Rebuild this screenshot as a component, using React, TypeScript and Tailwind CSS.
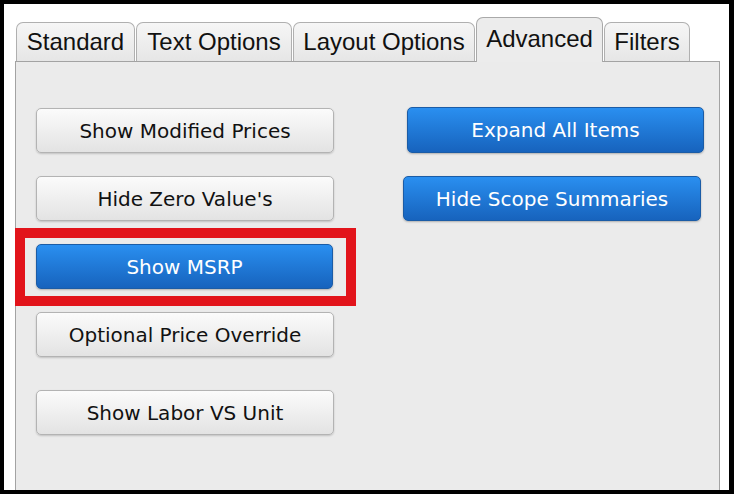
const tabs = [
  { label: "Standard", w: "w-[119px]" },
  { label: "Text Options", w: "w-[156px]" },
  { label: "Layout Options", w: "w-[182px]" },
  { label: "Advanced", w: "w-[127px]", active: true },
  { label: "Filters", w: "w-[86px]" },
];

const grayBtn =
  "h-[45px] rounded-[5px] border border-[#b3b3b3] bg-gradient-to-b from-[#fbfbfb] to-[#e3e3e3] text-[20px] text-[#111] shadow-[0_1px_2px_rgba(0,0,0,0.18)]";
const blueBtn =
  "h-[45px] rounded-[5px] border border-[#1b5ca6] bg-gradient-to-b from-[#2a8ff0] to-[#1763bd] text-[20px] text-white shadow-[0_1px_2px_rgba(0,0,0,0.25)]";

const App = () => {
  return (
    <div className="w-[734px] h-[494px] bg-black pt-[4px] pl-[4px] pr-[5px] pb-[4px] overflow-hidden">
      <div
        className="w-full h-full bg-white pl-[11px] pt-[13px] flex flex-col"
        style={{ fontFamily: "'DejaVu Sans', Verdana, sans-serif" }}
      >
        {/* tabs */}
        <div
          className="flex items-end gap-[1px] relative z-10 pl-[1px]"
          style={{ fontFamily: "'Liberation Sans', Arial, sans-serif" }}
        >
          {tabs.map((t) =>
            t.active ? (
              <div
                key={t.label}
                className={`${t.w} h-[45px] -mb-px rounded-t-[7px] border border-b-0 border-[#a9a9a9] bg-[#ececec] flex items-center justify-center text-[24px] text-[#111] pb-[2px]`}
              >
                {t.label}
              </div>
            ) : (
              <div
                key={t.label}
                className={`${t.w} h-[39px] rounded-t-[7px] border border-b-0 border-[#b0b0b0] bg-gradient-to-b from-[#f6f6f6] to-[#e6e6e6] flex items-center justify-center text-[24px] text-[#111]`}
              >
                {t.label}
              </div>
            )
          )}
        </div>

        {/* panel */}
        <div className="w-[705px] flex-1 border border-b-0 border-[#a3a3a3] bg-[#ebebeb] pl-[20px] pt-[46px] flex">
          <div className="w-[298px] flex flex-col">
            <button className={grayBtn}>Show Modified Prices</button>
            <button className={`${grayBtn} mt-[23px] h-[44px]`}>Hide Zero Value's</button>
            <div className="relative mt-[23px]">
              <button className={`${blueBtn} w-[297px]`}>Show MSRP</button>
              <div className="absolute left-[-21px] top-[-16px] right-[-22px] bottom-[-17px] border-[10px] border-[#e2141b]" />
            </div>
            <button className={`${grayBtn} mt-[23px] h-[44px]`}>Optional Price Override</button>
            <button className={`${grayBtn} mt-[33px] h-[44px]`}>Show Labor VS Unit</button>
          </div>
          <div className="ml-[69px] flex flex-col items-start -mt-[1px]">
            <button className={`${blueBtn} w-[297px] ml-[4px] h-[46px]`}>Expand All Items</button>
            <button className={`${blueBtn} w-[298px] mt-[23px] h-[44px]`}>Hide Scope Summaries</button>
          </div>
        </div>
      </div>
    </div>
  );
};

export default App;
